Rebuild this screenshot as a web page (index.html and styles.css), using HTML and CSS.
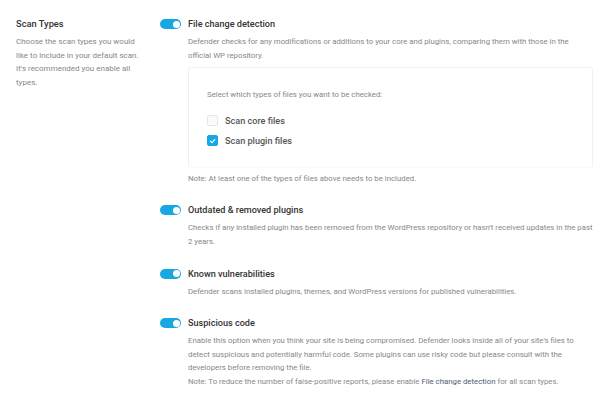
FILE: index.html
```html
<!DOCTYPE html>
<html>
<head>
<meta charset="utf-8">
<link rel="stylesheet" href="styles.css">
</head>
<body>
<div class="settings-row">
  <div class="col-label">
    <div class="label-title">Scan Types</div>
    <p class="label-desc">Choose the scan types you would like to include in your default scan. It's recommended you enable all types.</p>
  </div>
  <div class="col-fields">
    <div class="option">
      <div class="option-head"><span class="toggle"></span><span class="option-title">File change detection</span></div>
      <div class="option-body">
        <p class="desc">Defender checks for any modifications or additions to your core and plugins, comparing them with those in the official WP repository.</p>
        <div class="files-box">
          <p class="box-intro">Select which types of files you want to be checked:</p>
          <div class="check-row"><span class="checkbox"></span><span class="check-label">Scan core files</span></div>
          <div class="check-row"><span class="checkbox checked"><svg viewBox="0 0 10 10" width="10" height="10"><path d="M2.6 5.2 L4.3 6.8 L7.5 3.4" fill="none" stroke="#fff" stroke-width="1.3" stroke-linecap="round" stroke-linejoin="round"/></svg></span><span class="check-label">Scan plugin files</span></div>
        </div>
        <p class="desc note">Note: At least one of the types of files above needs to be included.</p>
      </div>
    </div>
    <div class="option">
      <div class="option-head"><span class="toggle"></span><span class="option-title">Outdated &amp; removed plugins</span></div>
      <div class="option-body">
        <p class="desc">Checks if any installed plugin has been removed from the WordPress repository or hasn't received updates in the past 2 years.</p>
      </div>
    </div>
    <div class="option">
      <div class="option-head"><span class="toggle"></span><span class="option-title">Known vulnerabilities</span></div>
      <div class="option-body">
        <p class="desc">Defender scans installed plugins, themes, and WordPress versions for published vulnerabilities.</p>
      </div>
    </div>
    <div class="option">
      <div class="option-head"><span class="toggle"></span><span class="option-title">Suspicious code</span></div>
      <div class="option-body">
        <p class="desc">Enable this option when you think your site is being compromised. Defender looks inside all of your site's files to detect suspicious and potentially harmful code. Some plugins can use risky code but please consult with the developers before removing the file.<br>Note: To reduce the number of false-positive reports, please enable <span class="inline-strong">File change detection</span> for all scan types.</p>
      </div>
    </div>
  </div>
</div>
</body>
</html>
```

FILE: styles.css
```css
html, body {
  margin: 0;
  padding: 0;
  background: #fff;
}
body {
  font-family: Roboto, "Liberation Sans", sans-serif;
  color: #333;
}
p { margin: 0; }

.settings-row {
  display: flex;
  padding: 17px 17px 0 16px;
}
.col-label {
  width: 128px;
  flex: none;
  margin-right: 16px;
}
.label-title {
  font-size: 9.3px;
  font-weight: 500;
  line-height: 14px;
  color: #333;
}
.label-desc {
  margin-top: 4px;
  font-size: 8px;
  line-height: 13.6px;
  color: #888;
}
.col-fields {
  flex: 1;
  display: flex;
  flex-direction: column;
  gap: 18px;
}
.option-head {
  display: flex;
  align-items: center;
  height: 14px;
}
.toggle {
  position: relative;
  width: 21px;
  height: 10px;
  border-radius: 5px;
  background: #17a8e3;
  flex: none;
  margin-right: 7px;
}
.toggle::after {
  content: "";
  position: absolute;
  right: 1.5px;
  top: 1.5px;
  width: 7px;
  height: 7px;
  border-radius: 50%;
  background: #fff;
}
.option-title {
  font-size: 9.1px;
  font-weight: 500;
  color: #333;
}
.option-body {
  padding-left: 28px;
  margin-top: 4px;
}
.desc {
  font-size: 7.8px;
  line-height: 13.6px;
  color: #888;
}
.files-box {
  margin-top: 5px;
  border: 1px solid #f0f0f0;
  border-bottom-color: #fafafa;
  border-radius: 3px;
  padding: 20px 18px 19px;
}
.box-intro {
  font-size: 7.8px;
  line-height: 13.6px;
  color: #888;
  margin-bottom: 12px;
}
.check-row {
  display: flex;
  align-items: center;
  height: 14px;
}
.check-row + .check-row {
  margin-top: 6px;
}
.checkbox {
  width: 9px;
  height: 9px;
  border: 1px solid #e6e6e6;
  background: #fafafa;
  border-radius: 2px;
  margin-right: 7px;
  flex: none;
  display: flex;
  align-items: center;
  justify-content: center;
}
.checkbox.checked {
  background: #17a8e3;
  border-color: #17a8e3;
}
.check-label {
  font-size: 9.1px;
  font-weight: 500;
  color: #555;
}
.note {
  margin-top: 4px;
}
.inline-strong {
  color: #4f5d72;
}
```
